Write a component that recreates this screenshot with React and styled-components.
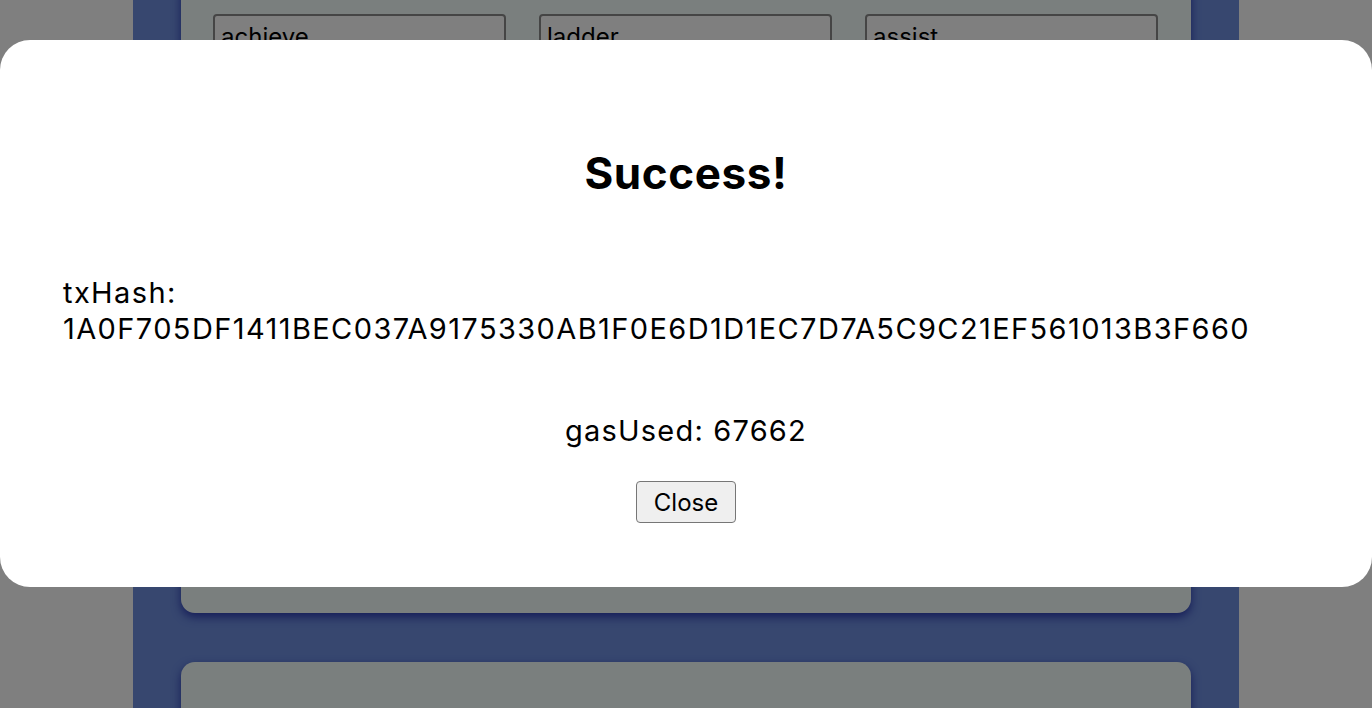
import React from "react";
import styled, { createGlobalStyle } from "styled-components";

const Global = createGlobalStyle`
  html, body { margin: 0; padding: 0; background: #ffffff; height: 100%; overflow: hidden; }
  body { font-family: Inter, "Liberation Sans", Arial, sans-serif; color: #000; }
  * { box-sizing: border-box; }
`;

const Page = styled.div`
  height: 708px;
  display: flex;
  justify-content: center;
  overflow: hidden;
`;

const Panel = styled.main`
  width: 1106px;
  background: #6e8edf;
  padding: 0 48px 48px;
  display: flex;
  flex-direction: column;
  gap: 49px;
`;

const Card = styled.section`
  background: #f5fffd;
  border-radius: 14px;
  box-shadow: 0 4px 10px rgba(20, 30, 160, 0.75);
  min-height: ${(p) => p.$h}px;
  margin-top: ${(p) => (p.$first ? "-20px" : "0")};
  padding: ${(p) => (p.$first ? "34px 33px 0 32px" : "32px")};
`;

const WordGrid = styled.div`
  display: grid;
  grid-template-columns: repeat(3, 293px);
  column-gap: 33px;
  row-gap: 20px;
`;

const WordInput = styled.input`
  height: 40px;
  width: 100%;
  border: 2px solid #8a8a8a;
  border-radius: 4px;
  background: #ffffff;
  font-family: Inter, "Liberation Sans", Arial, sans-serif;
  font-size: 24px;
  padding: 4px 6px 0;
  color: #000;
`;

const Overlay = styled.div`
  position: fixed;
  inset: 0;
  background: rgba(0, 0, 0, 0.5);
`;

const Modal = styled.div`
  position: fixed;
  top: 40px;
  left: 0;
  right: 0;
  height: 547px;
  background: #ffffff;
  border-radius: 30px;
  display: flex;
  flex-direction: column;
  padding: 0 63px;
`;

const Title = styled.h1`
  margin: 103px 0 0;
  text-align: center;
  font-size: 44px;
  font-weight: 700;
  line-height: 60px;
  letter-spacing: 0.6px;
`;

const Hash = styled.p`
  margin: 72px 0 0;
  font-size: 29px;
  line-height: 36px;
  letter-spacing: 1.4px;
  text-align: left;
`;

const Gas = styled.p`
  margin: 66px 0 0;
  font-size: 29px;
  line-height: 36px;
  letter-spacing: 1.2px;
  text-align: center;
`;

const CloseButton = styled.button`
  align-self: center;
  margin-top: 32px;
  width: 100px;
  height: 42px;
  font-family: Inter, "Liberation Sans", Arial, sans-serif;
  font-size: 24px;
  background: #efefef;
  border: 1px solid #767676;
  border-radius: 4px;
  color: #000;
  padding: 0;
`;

const words = ["achieve", "ladder", "assist", "", "", ""];

export default function App() {
  return (
    <>
      <Global />
      <Page>
        <Panel>
          <Card $first $h={633}>
            <WordGrid>
              {words.map((w, i) => (
                <WordInput key={i} defaultValue={w} readOnly />
              ))}
            </WordGrid>
          </Card>
          <Card $h={200} />
        </Panel>
      </Page>
      <Overlay />
      <Modal>
        <Title>Success!</Title>
        <Hash>
          txHash:
          <br />
          1A0F705DF1411BEC037A9175330AB1F0E6D1D1EC7D7A5C9C21EF561013B3F660
        </Hash>
        <Gas>gasUsed: 67662</Gas>
        <CloseButton>Close</CloseButton>
      </Modal>
    </>
  );
}
